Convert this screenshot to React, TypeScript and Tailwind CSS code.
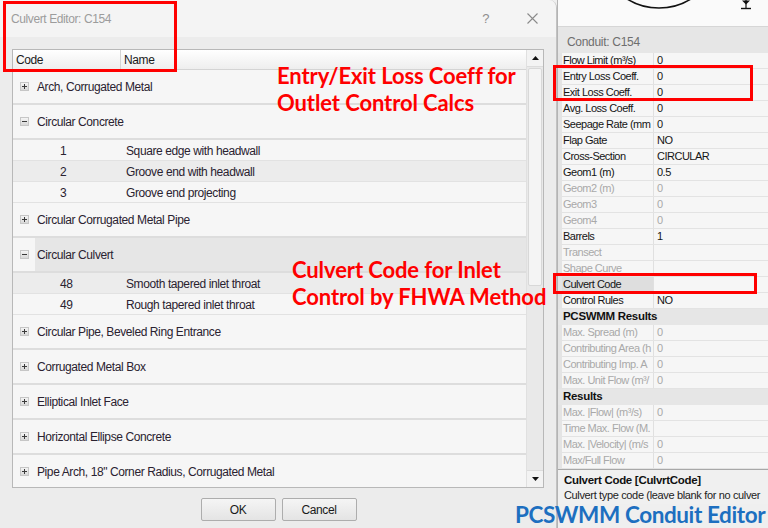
import React from "react";

type GridRow =
  | { kind: "group"; label: string; open: boolean; active?: boolean }
  | { kind: "item"; code: string; name: string; shaded: boolean };

const culvertRows: GridRow[] = [
  { kind: "group", label: "Arch, Corrugated Metal", open: false },
  { kind: "group", label: "Circular Concrete", open: true },
  { kind: "item", code: "1", name: "Square edge with headwall", shaded: false },
  { kind: "item", code: "2", name: "Groove end with headwall", shaded: true },
  { kind: "item", code: "3", name: "Groove end projecting", shaded: false },
  { kind: "group", label: "Circular Corrugated Metal Pipe", open: false },
  { kind: "group", label: "Circular Culvert", open: true, active: true },
  { kind: "item", code: "48", name: "Smooth tapered inlet throat", shaded: true },
  { kind: "item", code: "49", name: "Rough tapered inlet throat", shaded: false },
  { kind: "group", label: "Circular Pipe, Beveled Ring Entrance", open: false },
  { kind: "group", label: "Corrugated Metal Box", open: false },
  { kind: "group", label: "Elliptical Inlet Face", open: false },
  { kind: "group", label: "Horizontal Ellipse Concrete", open: false },
  { kind: "group", label: "Pipe Arch, 18\" Corner Radius, Corrugated Metal", open: false },
];

type PropKind = "normal" | "disabled" | "category" | "selected";

// labels are shown as far as the narrow name column lets them
const conduitProps: [string, string, PropKind][] = [
  ["Flow Limit (m³/s)", "0", "normal"],
  ["Entry Loss Coeff.", "0", "normal"],
  ["Exit Loss Coeff.", "0", "normal"],
  ["Avg. Loss Coeff.", "0", "normal"],
  ["Seepage Rate (mm", "0", "normal"],
  ["Flap Gate", "NO", "normal"],
  ["Cross-Section", "CIRCULAR", "normal"],
  ["Geom1 (m)", "0.5", "normal"],
  ["Geom2 (m)", "0", "disabled"],
  ["Geom3", "0", "disabled"],
  ["Geom4", "0", "disabled"],
  ["Barrels", "1", "normal"],
  ["Transect", "", "disabled"],
  ["Shape Curve", "", "disabled"],
  ["Culvert Code", "", "selected"],
  ["Control Rules", "NO", "normal"],
  ["PCSWMM Results", "", "category"],
  ["Max. Spread (m)", "0", "disabled"],
  ["Contributing Area (h", "0", "disabled"],
  ["Contributing Imp. A", "0", "disabled"],
  ["Max. Unit Flow (m³/", "0", "disabled"],
  ["Results", "", "category"],
  ["Max. |Flow| (m³/s)", "0", "disabled"],
  ["Time Max. Flow (M.", "", "disabled"],
  ["Max. |Velocity| (m/s", "0", "disabled"],
  ["Max/Full Flow", "0", "disabled"],
];

function ExpandBox({ open }: { open: boolean }) {
  return (
    <div className="w-[9px] h-[9px] shrink-0 bg-gradient-to-b from-[#f4f4f4] to-[#d8d8d8] border border-[#c6c6c6] flex items-center justify-center">
      <svg width="7" height="7" viewBox="0 0 7 7">
        <rect x="1" y="3" width="5" height="1" fill="#3a3a3a" />
        {!open && <rect x="3" y="1" width="1" height="5" fill="#3a3a3a" />}
      </svg>
    </div>
  );
}

function GridBody() {
  return (
    <div className="flex-1 flex flex-col overflow-hidden">
      {culvertRows.map((row, i) =>
        row.kind === "group" ? (
          <div
            key={i}
            className="h-[35px] shrink-0 flex items-center border-b-2 border-[#dddddd] bg-[#f6f6f6]"
          >
            <div className="w-[22px] pl-[7px] shrink-0 flex items-center">
              <ExpandBox open={row.open} />
            </div>
            <div
              className={
                "flex-1 h-full pl-[2px] pt-[1px] flex items-center " +
                (row.active ? "bg-[#e6e6e6]" : "")
              }
            >
              <span className="text-[#2a2230]">{row.label}</span>
            </div>
          </div>
        ) : (
          <div
            key={i}
            className={
              "h-[21px] shrink-0 pt-[1px] flex items-center border-b border-[#e2e2e2] " +
              (row.shaded ? "bg-[#ececec]" : "bg-[#f6f6f6]")
            }
          >
            <span className="w-[113px] pl-[47px] shrink-0 text-[#2a2230]">{row.code}</span>
            <span className="text-[#2a2230]">{row.name}</span>
          </div>
        )
      )}
    </div>
  );
}

function ScrollBar() {
  return (
    <div className="w-[17px] shrink-0 flex flex-col bg-[#e9e9e9] border-l border-[#e0e0e0]">
      <div className="h-[17px] shrink-0 flex items-center justify-center bg-[#f3f3f3] border-b border-[#dcdcdc]">
        <svg width="7" height="4" viewBox="0 0 7 4">
          <path d="M0 4 L3.5 0 L7 4 Z" fill="#111" />
        </svg>
      </div>
      <div className="mx-[1px] mt-[1px] h-[218px] bg-[#f4f4f4] border border-[#d8d8d8] rounded-[2px]" />
      <div className="flex-1" />
      <div className="h-[17px] shrink-0 flex items-center justify-center bg-[#f3f3f3] border-t border-[#dcdcdc]">
        <svg width="7" height="4" viewBox="0 0 7 4">
          <path d="M0 0 L3.5 4 L7 0 Z" fill="#111" />
        </svg>
      </div>
    </div>
  );
}

function CulvertDialog() {
  return (
    <div className="w-[557px] h-full shrink-0 flex flex-col bg-[#ececec] border-r border-[#c2c2c2] rounded-tr-[8px] overflow-hidden text-[12px] tracking-[-0.4px]">
      <div className="h-[37px] shrink-0 flex items-center pl-[11px] bg-[#f4f4f4]">
        <span className="text-[#9c9c9c]">Culvert Editor: C154</span>
        <span className="ml-auto text-[#8e8e8e] text-[13px]">?</span>
        <svg className="ml-[38px] mr-[18px]" width="11" height="11" viewBox="0 0 11 11">
          <path d="M0.5 0.5 L10.5 10.5 M10.5 0.5 L0.5 10.5" stroke="#8a8a8a" strokeWidth="1.1" />
        </svg>
      </div>

      <div className="mx-[12px] mt-[12px] h-[439px] shrink-0 flex border border-[#b8b8b8] bg-[#f6f6f6]">
        <div className="flex-1 flex flex-col min-w-0">
          <div className="h-[20px] shrink-0 flex items-stretch bg-gradient-to-b from-[#ffffff] to-[#eeeeee] border-b border-[#d4d4d4]">
            <div className="w-[108px] pl-[3px] pt-[1px] flex items-center border-r border-[#d4d4d4] text-[#1a1a1a]">Code</div>
            <div className="pl-[3px] pt-[1px] flex items-center text-[#1a1a1a]">Name</div>
          </div>
          <GridBody />
        </div>
        <ScrollBar />
      </div>

      <div className="flex justify-center gap-[6px] mt-[10px] pl-[1px]">
        <button className="w-[75px] h-[23px] bg-gradient-to-b from-[#f5f5f5] to-[#e4e4e4] border border-[#adadad] rounded-[2px] text-[#1a1a1a]">
          OK
        </button>
        <button className="w-[75px] h-[23px] bg-gradient-to-b from-[#f5f5f5] to-[#e4e4e4] border border-[#adadad] rounded-[2px] text-[#1a1a1a]">
          Cancel
        </button>
      </div>
    </div>
  );
}

function ConduitPanel() {
  return (
    <div className="flex-1 min-w-0 h-full flex flex-col border-l border-[#b4b4b4] text-[11px] tracking-[-0.5px]">
      {/* cross-section drawing strip */}
      <div className="h-[27px] shrink-0 bg-[#fafafa] border-b border-[#d6d6d6] overflow-hidden">
        <svg width="211" height="26" viewBox="0 0 211 26">
          <circle cx="101" cy="-52" r="60" fill="none" stroke="#111" strokeWidth="1.6" />
          <path d="M184 0.5 L192 0.5 L188 4.5 Z" fill="#111" />
          <line x1="188" y1="0" x2="188" y2="8" stroke="#111" strokeWidth="1.2" />
          <line x1="183" y1="8.5" x2="193" y2="8.5" stroke="#111" strokeWidth="1.4" />
        </svg>
      </div>

      <div className="h-[26px] shrink-0 flex items-center pl-[9px] pt-[3px] bg-[#e6e6e6] text-[12px] tracking-[-0.3px] text-[#6e6e6e]">
        Conduit: C154
      </div>

      <div className="shrink-0 flex flex-col bg-[#e4e4e4]">
        {conduitProps.map(([label, value, kind], i) =>
          kind === "category" ? (
            <div
              key={i}
              className="h-[16px] shrink-0 flex items-center pl-[5px] bg-[#e6e6e6] font-bold text-[11.5px] tracking-[-0.3px] text-[#111]"
            >
              {label}
            </div>
          ) : (
            <div key={i} className="h-[16px] shrink-0 flex ml-[4px] border-b border-[#e3e3e3] bg-[#f6f6f6]">
              <div
                className={
                  "w-[92px] shrink-0 pl-[1px] flex items-center overflow-hidden whitespace-nowrap border-r border-[#e0e0e0] " +
                  (kind === "selected" ? "bg-[#dedede] " : "") +
                  (kind === "disabled" ? "text-[#a9a9a9]" : "text-[#151515]")
                }
              >
                {label}
              </div>
              <div
                className={
                  "flex-1 pl-[3px] flex items-center whitespace-nowrap " +
                  (kind === "disabled" ? "text-[#a9a9a9]" : "text-[#151515]")
                }
              >
                {value}
              </div>
            </div>
          )
        )}
      </div>

      <div className="h-[35px] shrink-0 flex flex-col pl-[6px] pt-[2px] border-t border-[#a8a8a8] bg-[#f0f0f0] whitespace-nowrap overflow-hidden">
        <span className="font-bold text-[11.5px] tracking-[-0.3px] text-[#111] leading-[16px]">Culvert Code [CulvrtCode]</span>
        <span className="text-[#222] tracking-[-0.35px] leading-[14px]">Culvert type code (leave blank for no culver</span>
      </div>
      <div className="flex-1 bg-[#efefef]" />
    </div>
  );
}

export default function App() {
  return (
    <div className="relative w-[768px] h-[528px] overflow-hidden bg-[#efefef] flex font-['Liberation_Sans',Arial,sans-serif]">
      <CulvertDialog />
      <ConduitPanel />

      {/* callouts */}
      <div className="absolute left-[277px] top-[62px] whitespace-nowrap font-['Lato',sans-serif] font-bold text-[22px] leading-[27px] tracking-[-0.1px] text-[#ff0000]">
        <div>Entry/Exit Loss Coeff for</div>
        <div>Outlet Control Calcs</div>
      </div>
      <div className="absolute left-[292px] top-[256px] whitespace-nowrap font-['Lato',sans-serif] font-bold text-[22px] leading-[27px] tracking-[-0.1px] text-[#ff0000]">
        <div>Culvert Code for Inlet</div>
        <div>Control by FHWA Method</div>
      </div>

      <div className="absolute left-[3px] top-[1px] w-[174px] h-[71px] border-[3px] border-[#ff0000]" />
      <div className="absolute left-[553px] top-[65px] w-[200px] h-[36px] border-[3px] border-[#ff0000]" />
      <div className="absolute left-[553px] top-[273px] w-[204px] h-[21px] border-[3px] border-[#ff0000]" />

      <div className="absolute left-[515px] top-[502px] whitespace-nowrap font-['Lato',sans-serif] font-bold text-[22.5px] leading-[26px] tracking-[-0.4px] text-[#1d6fc0]">
        PCSWMM Conduit Editor
      </div>
    </div>
  );
}
